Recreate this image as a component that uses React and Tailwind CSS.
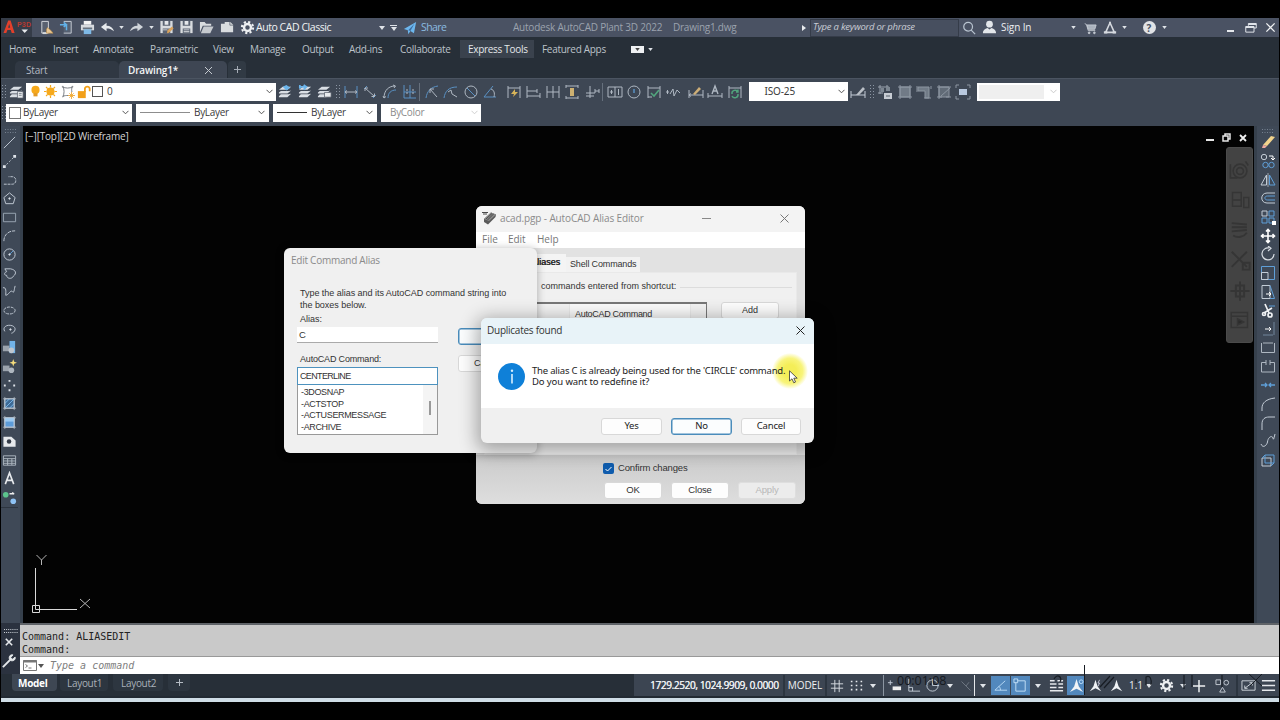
import React from "react";

const UI = "font-['Open_Sans','Noto_Sans',sans-serif]";
const NOTO = "font-['Noto_Sans','Open_Sans',sans-serif]";
const ARIAL = "font-['Liberation_Sans',Arial,sans-serif]";

function Svg({ s = 16, c = "#c3ccd6", w = 1, children }) {
  return (
    <svg width={s} height={s} viewBox="0 0 16 16" fill="none" stroke={c} strokeWidth={w} className="shrink-0">
      {children}
    </svg>
  );
}

function Cell({ className = "", children }) {
  return <div className={`flex shrink-0 items-center justify-center ${className}`}>{children}</div>;
}

function Caret({ c = "#dfe3e8", big = false }) {
  return (
    <svg width={big ? 6 : 5} height={big ? 4 : 3} viewBox="0 0 6 4" className="shrink-0">
      <path d="M0 0H6L3 4Z" fill={c} />
    </svg>
  );
}

function Chevron({ c = "#555" }) {
  return (
    <svg width="7" height="5" viewBox="0 0 7 5" fill="none" stroke={c} className="shrink-0">
      <path d="M.5 .8L3.5 3.8L6.5 .8" />
    </svg>
  );
}

function Grip() {
  return (
    <svg width="4" height="14" viewBox="0 0 4 14" className="shrink-0">
      <path d="M.5 0V14M3.5 0V14" stroke="#8b95a3" strokeDasharray="1 2" />
    </svg>
  );
}

function HGrip({ c = "#75808f" }) {
  return (
    <svg width="12" height="5" viewBox="0 0 12 5" className="shrink-0">
      <path d="M0 .5H12M0 3.5H12" stroke={c} strokeDasharray="1 1.5" />
    </svg>
  );
}

function TitleBar() {
  return (
    <div className={`flex h-[19px] shrink-0 items-center bg-[#4a5263] text-[10px] text-[#e0e3e8] ${UI}`}>
      <Cell className="h-full w-[31px] bg-[#353c48]">
        <svg width="30" height="19" viewBox="0 0 30 19">
          <path d="M1.5 15L6.2 2.5H8.6L12.6 15H9.7L8.8 12H5.4L4.3 15ZM6.1 9.8H8.2L7.2 6Z" fill="#e2402b" />
          <text x="15" y="8.5" fontSize="7" fontWeight="700" fill="#b8392f" textLength="14" fontFamily="Liberation Sans">P3D</text>
          <path d="M19.5 11.5H26L22.7 15Z" fill="#e5e8ec" />
        </svg>
      </Cell>
      <div className="w-[4px] shrink-0" />
      <Cell className="w-[20px]">
        <Svg s={15} c="#d6dade"><path d="M3 1.5H10V14H3Z" fill="#596170" /><path d="M4 14H9" strokeWidth="2" /><path d="M9 8L13 11.5L15 14H8V10Z" fill="#e9c896" stroke="#b98940" strokeWidth=".6" /></Svg>
      </Cell>
      <Cell className="w-[21px]">
        <Svg s={15} c="#c8ced5"><path d="M5 1.5H13V14H5" fill="#566071" /><path d="M1 5H7M5 2.5L8 5L5 7.5M8 5V11" stroke="#61b1e8" strokeWidth="1.6" /></Svg>
      </Cell>
      <Cell className="w-[20px]">
        <Svg s={15} c="none"><path d="M4 1H12V5H4Z" fill="#f4f4f4" /><path d="M1 5H15V11H1Z" fill="#d7dade" /><path d="M3 8H13V10H3Z" fill="#69737f" /><path d="M4 10H12V15H4Z" fill="#7fb9e6" /></Svg>
      </Cell>
      <Cell className="w-[20px]"><Svg s={15} c="none"><path d="M1 7.5L7 3V6C11 6 14 8 15 12C12 9.5 10 9 7 9V12Z" fill="#e6e9ec" /></Svg></Cell>
      <Cell className="w-[9px]"><Caret /></Cell>
      <Cell className="w-[21px]"><Svg s={15} c="none"><path d="M15 7.5L9 3V6C5 6 2 8 1 12C4 9.5 6 9 9 9V12Z" fill="#d0d5da" /></Svg></Cell>
      <Cell className="w-[9px]"><Caret /></Cell>
      <Cell className="w-[20px]">
        <Svg s={15} c="none"><path d="M1.5 1H14.5V14H1.5Z" fill="#d8dbdf" /><path d="M4 1H12V6H4ZM4 9H12V14H4Z" fill="#5a6372" /><path d="M6 1H10V5H6ZM4 10H9V11H4Z" fill="#e5e7ea" /><path d="M9 11L14 7L15.5 9L10.5 13.5L8.5 14Z" fill="#d9a25c" /></Svg>
      </Cell>
      <Cell className="w-[21px]">
        <Svg s={15} c="none"><path d="M1.5 1H14.5V14H1.5Z" fill="#d8dbdf" /><path d="M4 1H12V6H4ZM4 9H12V14H4Z" fill="#5a6372" /><path d="M6 1H10V5H6ZM5 10H11V11H5ZM5 12H11V13H5Z" fill="#e5e7ea" /></Svg>
      </Cell>
      <Cell className="w-[19px]">
        <Svg s={15} c="none"><path d="M1 2H6L7.5 4H13V6H4L1 13Z" fill="#d9dcdf" /><path d="M5 7H15.5L12 14H2Z" fill="#c6cacf" /></Svg>
      </Cell>
      <Cell className="w-[22px]">
        <Svg s={15} c="none"><path d="M1 4H5V2H11L14 5V13H1Z" fill="#d9dcdf" /><path d="M10.5 2V5.5H14" stroke="#59616f" strokeWidth=".8" /></Svg>
      </Cell>
      <Cell className="w-[18px]">
        <Svg s={15} c="#eef0f2"><circle cx="8" cy="8" r="3.7" strokeWidth="2.6" /><circle cx="8" cy="8" r="6" strokeWidth="2.2" strokeDasharray="2.3 2.41" /></Svg>
      </Cell>
      <div className="w-[120px] shrink-0 whitespace-nowrap text-[10.5px] tracking-[-0.45px] text-[#f0f2f4]">Auto CAD Classic</div>
      <Cell className="w-[12px]"><Caret big /></Cell>
      <Cell className="w-[11px] flex-col gap-[1px]"><div className="h-px w-[7px] bg-[#dfe3e8]" /><Caret big /></Cell>
      <Cell className="w-[22px]">
        <Svg s={14} c="none"><path d="M1 9L15 1L12.5 14L8.5 11.5L6 15L5.5 10.5Z" fill="#6db7ee" /><path d="M6 10.5L13 3L8.5 11.5" fill="#3d6fa3" /></Svg>
      </Cell>
      <div className="w-[92px] shrink-0 whitespace-nowrap text-[10.5px] tracking-[-0.6px] text-[#8bbbe0]">Share</div>
      <div className="w-[160px] shrink-0 whitespace-nowrap tracking-[-0.22px] text-[#9ba2ae]">Autodesk AutoCAD Plant 3D 2022</div>
      <div className="w-[125px] shrink-0 whitespace-nowrap tracking-[-0.25px] text-[#9ba2ae]">Drawing1.dwg</div>
      <Cell className="w-[12px]"><svg width="4" height="6" viewBox="0 0 4 6"><path d="M0 0L4 3L0 6Z" fill="#e8ebee" /></svg></Cell>
      <div className="flex h-[18px] w-[149px] shrink-0 items-center whitespace-nowrap border border-[#353c49] bg-[#474f5f] pl-[2px] text-[9.5px] italic tracking-[-0.25px] text-[#c9cdd4]">Type a keyword or phrase</div>
      <Cell className="w-[20px]"><Svg s={14} c="#b9c4d0" w={1.4}><circle cx="7" cy="6.5" r="5" /><path d="M10.5 10.5L15 15" /></Svg></Cell>
      <Cell className="w-[21px]"><Svg s={15} c="none"><circle cx="8" cy="4.5" r="3.6" fill="#e3e6ea" /><path d="M1 14C1 10.5 4 9 6 8.5L8 10L10 8.5C12 9 15 10.5 15 14Z" fill="#e3e6ea" /></Svg></Cell>
      <div className="w-[68px] shrink-0 whitespace-nowrap pl-[1px] tracking-[-0.1px] text-[#eceef1]">Sign In</div>
      <Cell className="w-[11px]"><Caret /></Cell>
      <Cell className="w-[21px]">
        <Svg s={14} c="#c7cdd5"><path d="M2 3L4 4L6 11H14" /><path d="M4.5 4.5H15L13.5 9.5H6Z" fill="#aab2bd" /><circle cx="7" cy="13.5" r="1" fill="#c7cdd5" /><circle cx="13" cy="13.5" r="1" fill="#c7cdd5" /></Svg>
      </Cell>
      <Cell className="w-[19px]"><Svg s={14} c="#d5d9df" w={1.8}><path d="M8 2L3 13H13Z" /><path d="M1 13H5M11 13H15M7 2.5H9" strokeWidth="2.6" /></Svg></Cell>
      <Cell className="w-[10px]"><Caret /></Cell>
      <Cell className="ml-[10px] w-[20px]">
        <div className="flex size-[13px] items-center justify-center rounded-full bg-[#e1e3e6] text-[10px] font-bold leading-none text-[#4a5263]">?</div>
      </Cell>
      <Cell className="w-[11px]"><Caret /></Cell>
      <div className="flex-1" />
      <Cell className="w-[19px] pt-[6px]"><div className="h-[2px] w-[7px] bg-[#e5e8ec]" /></Cell>
      <Cell className="w-[21px]"><Svg s={12} c="#e0e4e9" w={1.3}><path d="M4.5 5V2H15V8H12" /><path d="M1 6H12V13.5H1Z" /><path d="M1 7H12M4.5 3H15" strokeWidth="2" /></Svg></Cell>
      <Cell className="w-[18px]"><Svg s={11} c="#f0f2f4" w={1.8}><path d="M2 2L14 14M14 2L2 14" /></Svg></Cell>
    </div>
  );
}

function RibbonTabs() {
  return (
    <div className={`flex h-[24px] shrink-0 items-center whitespace-nowrap bg-[#272f38] pl-[8px] text-[10px] tracking-[-0.3px] text-[#bcc2c9] ${UI}`}>
      <div className="w-[44px]">Home</div>
      <div className="w-[40px]">Insert</div>
      <div className="w-[57px]">Annotate</div>
      <div className="w-[63px]">Parametric</div>
      <div className="w-[37px]">View</div>
      <div className="w-[52px]">Manage</div>
      <div className="w-[47px]">Output</div>
      <div className="w-[51px]">Add-ins</div>
      <div className="w-[60px]">Collaborate</div>
      <div className="flex h-[18px] w-[74px] items-center bg-[#3a424d] pl-[8px] text-[#e4e7ea]">Express Tools</div>
      <div className="w-[97px] pl-[8px]">Featured Apps</div>
      <Cell className="h-[7px] w-[13px] bg-[#eef0f2]"><Caret c="#444" /></Cell>
      <div className="ml-[4px]"><Caret /></div>
    </div>
  );
}

function DocTabs() {
  return (
    <div className={`flex h-[17px] shrink-0 whitespace-nowrap bg-[#272f38] text-[10px] text-[#b4bac2] ${UI}`}>
      <div className="ml-[14px] flex h-full w-[104px] items-center rounded-t-[5px] bg-[#303843] pl-[11px] pt-[1px] tracking-[-0.2px]">Start</div>
      <div className="flex h-full w-[108px] items-center justify-between rounded-t-[5px] bg-[#3e4653] pl-[9px] pr-[15px] pt-[1px] font-semibold tracking-[-0.15px] text-[#f3f5f6]">
        <span>Drawing1*</span>
        <svg width="7" height="7" viewBox="0 0 7 7" stroke="#c5cad0"><path d="M0 0L7 7M7 0L0 7" /></svg>
      </div>
      <Cell className="ml-[1px] h-full w-[18px] rounded-t-[4px] bg-[#313a44]">
        <svg width="7" height="7" viewBox="0 0 7 7" stroke="#a5acb5"><path d="M3.5 0V7M0 3.5H7" /></svg>
      </Cell>
    </div>
  );
}

const B = "#5f9fd8";

const Sheets = ({ extra }) => (
  <Svg s={15} c="none">
    <path d="M1 6L5 3H14L10 6ZM1 9L3 7.5H12L14 7L10 10H1ZM1 13L3 11H11L14 10.5L10 14H1Z" fill="#d9dee4" />
    {extra}
  </Svg>
);

const Group = ({ items, className = "" }) => (
  <div className={`flex shrink-0 items-center ${className}`}>
    {items.map((x, i) => <Cell key={i} className="w-[19.5px] opacity-85">{x}</Cell>)}
  </div>
);

function Toolbars() {
  const dims1 = [
    <Svg><path d="M2 2V14M14 2V14" stroke={B} /><path d="M2 8H14M4 6.5L2 8L4 9.5M12 6.5L14 8L12 9.5" /></Svg>,
    <Svg><path d="M2 5L5 2M11 14L14 11" stroke={B} /><path d="M3 4L12.5 12.5M3 7V4H6M12.5 9.5V12.5H9.5" /></Svg>,
    <Svg><path d="M6 14C6 9 9 6 14 6" stroke={B} /><path d="M2 14C2 6 7 2 13 2M1 12L2 14L4 12.5M11 1L13.5 2L12 4" /></Svg>,
    <Svg><path d="M3 1V14H15M9 1V14M3 8H15" stroke={B} /><path d="M6 5V11M12 5V11" strokeDasharray="2 1" /></Svg>,
  ];
  const dims2 = [
    <Svg><path d="M2 14C3 7 7 3 14 2" stroke={B} /><path d="M6 5L13 13M6 9V5H10" /></Svg>,
    <Svg><path d="M1 14C2 7 6 3 14 3" stroke={B} /><path d="M5 8L8 6L9 10L14 13" /></Svg>,
    <Svg><circle cx="8" cy="8" r="6" /><path d="M4 4L12 12" stroke={B} /></Svg>,
    <Svg><path d="M11 2L2 13H14" stroke={B} /><path d="M9 5C12 6 13 9 12 13" /></Svg>,
  ];
  const dims3 = [
    <Svg><path d="M2 2V14M14 2V14M2 4H14" /><path d="M9 5L5 10H8L7 13L12 8H9Z" fill="#f2c75a" stroke="none" /></Svg>,
    <Svg><path d="M2 2V14M12 5V9M15 9V14M2 7H12M2 12H15" /></Svg>,
    <Svg><path d="M2 2V14M8 2V14M14 2V14M2 8H14" /></Svg>,
    <Svg><path d="M2 2H14M2 14H14M2 1V4M14 1V4M2 12V15M14 12V15" /><path d="M6 4H10V12H6Z" fill="#e8c477" stroke="none" /></Svg>,
    <Svg><path d="M6 2V14M2 9H11M2 12H10M11 7H15M11 5V9M15 5V9" /></Svg>,
  ];
  const dims4 = [
    <Svg><path d="M1 3H15V13H1ZM8 3V13M3 8H6M4.5 6V10M11.5 5V11" /></Svg>,
    <Svg><circle cx="8" cy="8" r="6" /><path d="M8 5V9" stroke={B} strokeWidth="1.5" /></Svg>,
    <Svg><path d="M2 2V14M14 2V14M2 4H14M2 13H6" /><path d="M5 9L8 12L13 6" stroke="#55b685" strokeWidth="1.6" /></Svg>,
    <Svg><path d="M1 8H4M2.5 6V10M5 10L8 5L9 12L12 6L15 9" /></Svg>,
  ];
  const dims5 = [
    <Svg><path d="M1 6V14M15 6V14M1 11H15M3 9.5L1 11L3 12.5" /><path d="M5 10L11 3L13 5L7 11Z" fill="#e7c07e" stroke="none" /></Svg>,
    <Svg><path d="M1 9V14M15 9V14M1 12H15" /><path d="M5 10L8 2L11 10M6 7H10" strokeWidth="1.4" /></Svg>,
    <Svg><path d="M2 2V14M14 2V14M2 4H14" /><path d="M5 10A3.2 3.2 0 0 1 11 8M11 10A3.2 3.2 0 0 1 5 12M11 5.5V8H9" stroke="#55b685" strokeWidth="1.4" /></Svg>,
  ];
  const refs = [
    <Svg c="#aab3bd"><path d="M1 3H12M3 1V10M1 9H6M10 1V7" /><path d="M4 4H7V8H4ZM9 3H13V7H9Z" fill="#87919c" stroke="none" /><path d="M7 9H15V15H7Z" fill="#dfe4ea" stroke="none" /><path d="M9 12H13" stroke="#59636f" /></Svg>,
    <Svg c="#9aa4af"><path d="M3 3H13V13H3Z" fill="#7b8590" /><path d="M1 3H15M1 13H15M3 1V15M13 1V15" /></Svg>,
    <Svg c="#9aa4af"><path d="M2 3H13V14H9V7H2Z" fill="#7b8590" /><path d="M1 2V8M15 2V5M8 14H15" /></Svg>,
    <Svg c="#9aa4af"><path d="M3 3H13V13H3Z" fill="#68727e" /><path d="M1 3H15M1 13H6M3 1V15M5 12L14 4M10 13H15" /></Svg>,
    <Svg c="#9aa4af"><path d="M1 4V1H4M12 1H15V4M1 12V15H4M12 15H15V12" /><path d="M4 5H12V11H4Z" fill="#cfe0f8" stroke="none" /></Svg>,
  ];
  const Sep = () => <div className="h-[18px] w-px shrink-0 bg-[#66707d]" />;
  return (
    <div className={`flex h-[48px] shrink-0 flex-col border-t border-[#4b5461] bg-[#3e4754] pt-[3px] text-[10px] text-[#3b3b3b] ${UI}`}>
      <div className="flex h-[19px] items-center">
        <Cell className="w-[6px]"><Grip /></Cell>
        <Cell className="w-[19px]"><Sheets extra={<path d="M9 8H15V15H9ZM10.5 10H13.5M10.5 12H13.5" fill="#e8ebee" stroke="#59616d" strokeWidth=".8" />} /></Cell>
        <div className="flex h-[18px] w-[250px] shrink-0 items-center bg-white pr-[3px]">
          <Cell className="w-[19px]"><Svg s={13} c="none"><circle cx="8" cy="6" r="5" fill="#f6a91c" /><path d="M5.5 10H10.5V14H5.5Z" fill="#e39a25" /></Svg></Cell>
          <Cell className="w-[10px]"><Svg s={13} c="#f6a91c" w={2}><circle cx="8" cy="8" r="4" fill="#f6a91c" /><path d="M8 0V3M8 13V16M0 8H3M13 8H16M2.5 2.5L4.5 4.5M11.5 11.5L13.5 13.5M13.5 2.5L11.5 4.5M2.5 13.5L4.5 11.5" strokeWidth="1.5" /></Svg></Cell>
          <Cell className="ml-[3px] w-[20px]"><Svg s={14} c="#6a6f76"><path d="M1 2C6 4 9 4 14 2M2 1C4 6 4 9 2 14M13 1C12 4 12 6 12.500 8M2 13C4 12 6 12 8 12" /><path d="M12 8V16M8 12H16M9.5 9.5L14.5 14.5M14.5 9.5L9.5 14.5" stroke="#f0a830" /></Svg></Cell>
          <Cell className="w-[12px]"><Svg s={14} c="#f2a019" w={2}><path d="M1 7H10V15H1Z" fill="#f2a019" stroke="none" /><path d="M9 8V4A2.8 2.8 0 0 1 14.5 4V7" /></Svg></Cell>
          <div className="ml-[2px] h-[11px] w-[11px] border border-[#555]" />
          <div className="ml-[4px] flex-1 text-[10px]">0</div>
          <Chevron />
        </div>
        <Cell className="w-[19px]"><Sheets extra={<path d="M5 3L9 1L13 4L9 7Z" fill="#6bb4ea" />} /></Cell>
        <Cell className="w-[20px]"><Sheets extra={<path d="M2 1V5M1 3H8M6 1L9 3L6 6" stroke="#6bb4ea" strokeWidth="1.8" />} /></Cell>
        <Cell className="w-[19px]"><Sheets extra={<path d="M8 9H15V14H8Z" fill="#e8ebee" stroke="#59616d" strokeWidth=".8" />} /></Cell>
        <Cell className="w-[7px]"><Grip /></Cell>
        <Group items={dims1} />
        <Sep />
        <Group items={dims2} className="ml-[2px]" />
        <Group items={dims3} className="ml-[4px] w-[98px]" />
        <Sep />
        <Group items={dims4} className="ml-[2px] w-[80px]" />
        <Group items={dims5} className="ml-[1px]" />
        <div className="ml-[4px] flex h-[19px] w-[99px] shrink-0 items-center justify-between bg-white pl-[16px] pr-[3px]">
          <span className={`tracking-[-0.15px] ${NOTO}`}>ISO-25</span><Chevron />
        </div>
        <Cell className="w-[20px]"><Svg><path d="M1 7V14M15 7V14M1 11H15" /><path d="M6 11L13 3L15 5L9 11Z" fill="#b9bfc6" stroke="none" /></Svg></Cell>
        <Cell className="w-[8px]"><Grip /></Cell>
        <Group items={refs} />
        <div className="ml-[4px] flex h-[18px] w-[83px] shrink-0 items-center bg-white py-[2px] pl-[2px] pr-[3px]">
          <div className="mr-[6px] h-full flex-1 bg-[#efefef]" /><Chevron c="#c9c9c9" />
        </div>
      </div>
      <div className="flex h-[23px] items-center text-[10px]">
        <Cell className="w-[5px]"><Grip /></Cell>
        <div className="flex h-[18px] w-[126px] items-center bg-white px-[3px]">
          <div className="h-[12px] w-[12px] border border-[#777]" />
          <span className="ml-[2px] flex-1 tracking-[-0.3px]">ByLayer</span><Chevron />
        </div>
        <div className="ml-[4px] flex h-[18px] w-[133px] items-center bg-white px-[4px]">
          <div className="h-px w-[50px] bg-[#8d8d8d]" />
          <span className="ml-[4px] flex-1 tracking-[-0.3px]">ByLayer</span><Chevron />
        </div>
        <div className="ml-[4px] flex h-[18px] w-[104px] items-center bg-white px-[4px]">
          <div className="h-px w-[30px] bg-[#333]" />
          <span className="ml-[4px] flex-1 tracking-[-0.3px]">ByLayer</span><Chevron />
        </div>
        <div className="ml-[4px] flex h-[18px] w-[100px] items-center bg-white pl-[9px] pr-[3px] text-[#8c8c8c]">
          <span className="flex-1 tracking-[-0.3px]">ByColor</span><Chevron c="#cfcfcf" />
        </div>
      </div>
    </div>
  );
}

function DrawBar() {
  const icons = [
    <Svg s={15}><path d="M2 14L14 2" /></Svg>,
    <Svg s={15}><path d="M2 14L14 2" strokeDasharray="2 2" /><path d="M1 12H4V15H1ZM12 1H15V4H12Z" fill="#dfe4ea" stroke="none" /></Svg>,
    <Svg s={15}><path d="M2 13H11C16 13 16 5 11 5H7" strokeDasharray="3 1" /></Svg>,
    <Svg s={15}><path d="M8 2L14 7L12 13.5H4L2 7Z" /><circle cx="8" cy="8" r=".8" fill="#fff" /></Svg>,
    <Svg s={15} c="#9ba7b4"><path d="M1.5 3.5H14.5V12.5H1.5Z" /></Svg>,
    <Svg s={15}><path d="M2 14C2 8 6 3 14 3" strokeDasharray="4 1" /></Svg>,
    <Svg s={15}><circle cx="8" cy="8" r="6" /><path d="M8 8L12 4" stroke={B} /><circle cx="8" cy="8" r=".8" fill="#fff" /></Svg>,
    <Svg s={15}><path d="M3 3H9C15 4 16 8 12 11C11 14 5 14 5 10C2 10 2 7 5 6Z" /></Svg>,
    <Svg s={15}><path d="M1 4C5 3 4 9 4 12C7 12 9 6 11 8C13 11 13 5 14 2" /></Svg>,
    <Svg s={15}><ellipse cx="8" cy="8" rx="6" ry="3.7" strokeDasharray="3 1" /></Svg>,
    <Svg s={15}><path d="M3 10C0 6 5 2 11 4C16 6 14 11 10 12" /><circle cx="9" cy="8" r=".8" fill="#fff" /></Svg>,
    <Svg s={15}><path d="M1 6H8V12H1Z" fill="#9ba3ad" stroke="none" /><path d="M8 1H14V14H8Z" fill="#72b3e8" stroke="none" /><circle cx="10" cy="11" r="3" fill="#bfc6ce" stroke="none" /></Svg>,
    <Svg s={15}><path d="M1 7H8V13H1Z" fill="#9ba3ad" stroke="none" /><circle cx="10" cy="12" r="3" fill="#aeb6bf" stroke="none" /><path d="M12 0L13 3L16 4L13 5L12 8L11 5L8 4L11 3Z" fill="#f5dc7c" stroke="none" /></Svg>,
    <Svg s={15} c="none"><path d="M7 2H9V4H7ZM7 12H9V14H7ZM2 7H4V9H2ZM12 7H14V9H12Z" fill="#dfe4ea" /></Svg>,
    <Svg s={15}><path d="M3 3H13V13H3Z" fill="#3e6a96" /><path d="M3 8L8 3M3 13L13 3M8 13L13 8" stroke="#79b7ea" /><path d="M1 3H15M1 13H15M3 1V15M13 1V15" strokeWidth=".7" /></Svg>,
    <Svg s={15}><path d="M3 3H13V13H3Z" fill="#5d9cd8" /><path d="M3 3H13V7H3Z" fill="#9bc9f0" stroke="none" /><path d="M1 3H15M1 13H15M3 1V15M13 1V15" strokeWidth=".7" /></Svg>,
    <Svg s={15}><path d="M1.5 3H10L14.5 7V13.5H1.5Z" fill="#e6e9ec" stroke="none" /><circle cx="7.5" cy="8" r="2.4" fill="#333b47" stroke="none" /></Svg>,
    <Svg s={15} c="#aeb7c1"><path d="M1.5 3H14.5V13H1.5ZM1.5 6H14.5M1.5 8.5H14.5M1.5 11H14.5M6 6V13M10.5 6V13" /></Svg>,
    <Svg s={15} c="#e6e9ec" w={1.7}><path d="M3.5 14L8 2L12.5 14M5 10H11" /></Svg>,
    <Svg s={15} c="none"><circle cx="4" cy="5" r="3" fill="#5cc48d" /><path d="M8 4H13M11 2.5L13 4.5" stroke="#eee" strokeWidth="1.4" /><circle cx="12" cy="12" r="3" fill="#8fc3f5" /></Svg>,
  ];
  return (
    <div className="flex w-[22px] shrink-0 flex-col border-r-[3px] border-[#36404c] bg-[#3f4957]">
      <Cell className="h-[7px] pt-[3px]"><HGrip /></Cell>
      {icons.map((x, i) => <Cell key={i} className="h-[18.7px] w-[17px]">{x}</Cell>)}
      <div className="h-px w-[17px] bg-[#2d3540]" />
    </div>
  );
}

function ModifyBar() {
  const icons = [
    <Svg c="none"><path d="M3 11L11 2L15 3L7 12Z" fill="#f1d38c" /><path d="M3 11L7 12L5 14L2 14Z" fill="#f0a9a0" /></Svg>,
    <Svg><circle cx="4" cy="4" r="2.7" /><path d="M9 3H13V7M11 5L13 7L15 5" stroke="#fff" /><circle cx="5.5" cy="12" r="2.7" stroke={B} /><circle cx="11.5" cy="12" r="2.7" stroke={B} /></Svg>,
    <Svg><path d="M6.5 3V13H1Z" /><path d="M9.5 3V13H15Z" stroke={B} /><path d="M8 1V15" strokeWidth=".7" /></Svg>,
    <Svg><path d="M15 3H7C0 3 0 13 7 13H15" /><path d="M15 6H7.5C4 6 4 10 7.5 10H15" stroke={B} /></Svg>,
    <Svg><path d="M2 2H7V7H2Z" /><path d="M9 2H14V7H9ZM2 9H7V14H2ZM9 9H14V14H9Z" stroke={B} /><path d="M12 12H16V16H12Z" fill="#fff" stroke="none" /></Svg>,
    <Svg c="#fff" w={1.6}><path d="M8 1V15M1 8H15M6 3.5L8 1.5L10 3.5M6 12.5L8 14.5L10 12.5M3.5 6L1.5 8L3.5 10M12.5 6L14.5 8L12.5 10" /></Svg>,
    <Svg c="#d9dee4" w={1.2}><path d="M9 2A6 6 0 1 0 14 8M8 0L11 2.3L8 5" /></Svg>,
    <Svg><path d="M1.5 1.5H14.5V14.5H1.5Z" stroke={B} /><path d="M1.5 7.5H8V14.5H1.5Z" /></Svg>,
    <Svg><path d="M2 1.5H10V14.5H2Z" /><path d="M10 1.5L14.5 14.5H10" stroke={B} /><path d="M6 10H11M9 8L11 10L9 12" stroke="#fff" /></Svg>,
    <Svg c="#f0f2f4" w={1.7}><path d="M5 1L9 10M12 5L4 10" /><circle cx="10" cy="12" r="2" /><circle cx="4" cy="11" r="1.5" /><path d="M9 3H15" stroke={B} strokeWidth="1" /></Svg>,
    <Svg><path d="M3 14H13M14 1V14" stroke="#71859b" /><path d="M5 8H11M9 6L11 8L9 10" stroke="#fff" /></Svg>,
    <Svg c="#aeb7c1"><path d="M1.5 3V12.5H14.5V3M3 3H13" /></Svg>,
    <Svg c="#aeb7c1"><path d="M6 3.5H1.5V13H14.5V3.5H10M6 1V6M10 1V6" /></Svg>,
    <Svg c={B} w={1.3}><path d="M1 8H7M5 6L7 8L5 10M15 8H9M11 6L9 8L11 10" /></Svg>,
    <Svg><path d="M2 15V12C2 7 6 3 15 2" /></Svg>,
    <Svg><path d="M2 15V9C2 4 5 2 9 2H15" /></Svg>,
    <Svg><path d="M1 11C3 16 7 12 7.500 9C8 4 12 2 13 5C13.500 8 14 5 15 1" /></Svg>,
    <Svg><path d="M2 6H11V14H2Z" /><path d="M5 3H14V11H5ZM2 6L5 3M11 14L14 11" stroke={B} /></Svg>,
  ];
  return (
    <div className="flex w-[25px] shrink-0 flex-col border-l-[3px] border-[#36404c] bg-[#3f4957]">
      <Cell className="h-[7px] pt-[3px]"><HGrip /></Cell>
      {icons.map((x, i) => <Cell key={i} className="h-[18.7px] w-[21px]">{x}</Cell>)}
    </div>
  );
}

const BTN_TONES = {
  normal: "border-[#d8d8d8] bg-[#fdfdfd]",
  primary: "border-[#4a8cbb] bg-[#fbfdfe] shadow-[inset_0_0_0_0.5px_#4a8cbb]",
  disabled: "border-[#dedede] bg-[#ececec] text-[#b8b8b8]",
};

function Btn({ className = "", tone = "normal", children }) {
  return <Cell className={`h-[17px] rounded-[3px] border ${BTN_TONES[tone]} ${className}`}>{children}</Cell>;
}

function AliasEditor() {
  return (
    <div className={`absolute left-[453px] top-[80px] flex h-[298px] w-[329px] flex-col overflow-hidden rounded-[6px] bg-[#e2e2e2] text-[10px] ${UI}`}>
      <div className="flex h-[26px] shrink-0 items-center bg-[#f3f3f3] pb-[2px] pl-[5px] text-[#8b8b8b]">
        <svg width="16" height="16" viewBox="0 0 16 16" fill="none">
          <path d="M3 9L10 2.500L15 4.500L14.500 7L7 14.500L3 12Z" fill="#5a5a5a" />
          <path d="M3 9L10 2.500L15 4.500L8 11Z" fill="#8a8a8a" />
          <path d="M1 2.500H7M2 4H6M5 9L11 3.500M6.500 10L12.500 4" stroke="#4a4a4a" />
        </svg>
        <span className="ml-[3px] flex-1 whitespace-nowrap tracking-[-0.12px]">acad.pgp - AutoCAD Alias Editor</span>
        <div className="h-px w-[9px] bg-[#888]" />
        <svg width="9" height="9" viewBox="0 0 9 9" stroke="#777" className="ml-[69px] mr-[16px]"><path d="M.5 .5L8.5 8.5M8.5 .5L.5 8.5" /></svg>
      </div>
      <div className="flex h-[16px] shrink-0 items-center bg-white pb-[1px] pl-[6px] text-[#777]">
        <span className="w-[26px]">File</span><span className="w-[29px] tracking-[-0.1px]">Edit</span><span>Help</span>
      </div>
      <div className={`mx-[8px] flex h-[24px] shrink-0 items-end text-[9px] text-[#333] ${ARIAL}`}>
        <div className="flex h-[18px] w-[82px] items-center justify-end bg-[#f4f4f4] pr-[6px] text-[#222] [text-shadow:0.4px_0_0_#222]">Aliases</div>
        <div className="flex h-[15px] w-[74px] items-center whitespace-nowrap bg-[#f2f2f2] pl-[4px] pt-[1px] tracking-[-0.15px]">Shell Commands</div>
      </div>
      <div className={`mx-[8px] flex h-[183px] shrink-0 flex-col border border-[#e9e9e9] bg-[#f0f0f0] text-[9px] text-[#333] ${ARIAL}`}>
        <div className="flex h-[29px] items-center pb-[1px]">
          <span className="ml-[56px] whitespace-nowrap tracking-[0.02px]">commands entered from shortcut:</span>
          <div className="ml-[4px] mr-[4px] h-px flex-1 bg-[#dcdcdc]" />
        </div>
        <div className="flex">
          <div className="h-[40px] w-[222px] border-r border-t-2 border-[#777] bg-[#f3f3f3]">
            <div className="ml-[84px] flex h-[22px] w-[122px] items-center border-x border-[#eaeaea] bg-[#fbfbfb] pl-[5px] tracking-[-0.3px]">AutoCAD Command</div>
          </div>
          <Btn className="ml-[14px] w-[58px]">Add</Btn>
        </div>
      </div>
      <div className={`flex flex-1 flex-col bg-linear-to-b from-[#cbcbcb] to-[#dedede] text-[9.5px] text-[#333] ${ARIAL}`}>
        <div className="ml-[127px] mt-[8px] flex h-[11px] items-center">
          <div className="flex size-[11px] items-center justify-center rounded-[2px] bg-[#0f5cad]">
            <svg width="7" height="6" viewBox="0 0 7 6" fill="none" stroke="#fff"><path d="M.5 3L2.5 5L6.5 1" /></svg>
          </div>
          <span className="ml-[4px] whitespace-nowrap tracking-[-0.15px]">Confirm changes</span>
        </div>
        <div className="ml-[128px] mt-[8px] flex gap-[9px] tracking-[-0.15px]">
          <Btn className="w-[58px]">OK</Btn>
          <Btn className="w-[58px]">Close</Btn>
          <Btn tone="disabled" className="w-[58px]">Apply</Btn>
        </div>
      </div>
    </div>
  );
}

function EditAlias() {
  return (
    <div className={`absolute left-[261px] top-[122px] flex h-[205px] w-[253px] flex-col overflow-hidden rounded-[6px] bg-[#f0f0f0] text-[9px] leading-[11px] text-[#333] shadow-[0_1px_8px_rgba(0,0,0,0.3)] ${ARIAL}`}>
      <div className={`flex h-[25px] items-center pl-[7px] text-[10px] tracking-[-0.25px] text-[#8a8a8a] ${UI}`}>Edit Command Alias</div>
      <div className="mt-[15px] whitespace-nowrap pl-[16px] leading-[11.5px] tracking-[-0.03px]">Type the alias and its AutoCAD command string into<br />the boxes below.</div>
      <div className="flex pl-[13px]">
        <div className="w-[141px] shrink-0">
          <div className="mt-[3px] pl-[3px]">Alias:</div>
          <div className="mt-[2px] flex h-[16px] items-center border-b border-[#aaa] bg-white pl-[2px] text-[9.5px]">C</div>
          <div className="mt-[11px] pl-[3px] tracking-[-0.18px]">AutoCAD Command:</div>
          <div className="mt-[2px] flex h-[18px] items-center border border-[#4d92be] bg-white pl-[2px] tracking-[-0.65px]">CENTERLINE</div>
          <div className="flex h-[50px] border border-t-0 border-[#999] bg-white">
            <div className="flex-1 whitespace-nowrap pl-[3px] pt-[2px] leading-[11.7px] tracking-[-0.35px]">
              <div>-3DOSNAP</div><div>-ACTSTOP</div><div>-ACTUSERMESSAGE</div><div>-ARCHIVE</div>
            </div>
            <Cell className="w-[14px] bg-[#f4f4f4] pb-[4px]"><div className="h-[14px] w-[2px] bg-[#999]" /></Cell>
          </div>
        </div>
        <div className="ml-[20px] mt-[17px] flex shrink-0 flex-col gap-[10px]">
          <Btn tone="primary" className="w-[60px]" />
          <Btn className="w-[60px]">Cancel</Btn>
        </div>
      </div>
    </div>
  );
}

function Duplicates() {
  return (
    <div className={`absolute left-[458px] top-[192px] flex h-[125px] w-[333px] flex-col rounded-[6px] bg-[#f0f0f0] text-[9.5px] text-[#222] shadow-[0_4px_18px_4px_rgba(0,0,0,0.32)] ${NOTO}`}>
      <div className={`flex h-[26px] shrink-0 items-center justify-between rounded-t-[6px] bg-[#e8f3f8] pb-[1px] pl-[6px] pr-[9px] text-[10px] tracking-[-0.25px] text-[#333] ${UI}`}>
        <span>Duplicates found</span>
        <svg width="9" height="9" viewBox="0 0 9 9" stroke="#222"><path d="M.5 .5L8.5 8.5M8.5 .5L.5 8.5" /></svg>
      </div>
      <div className="relative flex h-[64px] shrink-0 items-center bg-white pl-[17px]">
        <div className="absolute left-[291px] top-[9px] size-[36px] rounded-full bg-[radial-gradient(circle,#f4ee58_25%,#f8f47c_50%,transparent_71%)]" />
        <div className="flex size-[27px] items-center justify-center rounded-full bg-[#0f80d8]">
          <svg width="4" height="15" viewBox="0 0 4 15" fill="#d6efff"><circle cx="2" cy="1.8" r="1.2" /><path d="M1.2 5H2.8V14.5H1.2Z" /></svg>
        </div>
        <div className="relative ml-[7px] whitespace-nowrap leading-[11px]">
          <div className="tracking-[-0.2px]">The alias C is already being used for the 'CIRCLE' command.</div>
          <div className="tracking-[-0.1px]">Do you want to redefine it?</div>
        </div>
        <svg width="9" height="14" viewBox="0 0 9 14" className="absolute left-[308px] top-[26px]"><path d="M.5 .8V11L3 8.8L4.8 12.8L6.5 12L4.8 8.2H8.2Z" fill="#fff" stroke="#333" strokeWidth=".8" /></svg>
      </div>
      <div className="flex flex-1 items-center justify-end gap-[9px] pr-[13px] pt-[2px] tracking-[-0.2px]">
        <Btn className="w-[61px]">Yes</Btn>
        <Btn tone="primary" className="w-[61px]">No</Btn>
        <Btn className="w-[60px]">Cancel</Btn>
      </div>
    </div>
  );
}

function Canvas() {
  return (
    <div className="relative flex flex-1 flex-col bg-[#030303]">
      <div className="flex h-[21px] items-center justify-between pl-[2px] pr-[7px]">
        <span className={`whitespace-nowrap text-[10px] tracking-[-0.2px] text-[#d6d6d6] ${UI}`}>[−][Top][2D Wireframe]</span>
        <div className="flex items-center pt-[2px]">
          <div className="mr-[8px] mt-[4px] h-[2px] w-[8px] bg-[#e5e5e5]" />
          <svg width="9" height="9" viewBox="0 0 9 9" fill="none" stroke="#e5e5e5" strokeWidth="1.5"><path d="M3 2.5V1H8V6H6.5M1 3H6V8H1Z" /></svg>
          <svg width="8" height="8" viewBox="0 0 8 8" stroke="#f0f0f0" strokeWidth="1.8" className="ml-[8px]"><path d="M1 1L7 7M7 1L1 7" /></svg>
        </div>
      </div>
      <div className="mr-px flex h-[196px] w-[27px] flex-col items-center justify-between self-end rounded-[3px] border border-[#4b4b4b] bg-[#434343] py-[12px]">
        <Svg s={22} c="#353535" w={1.2}><circle cx="8" cy="8" r="5" /><circle cx="8" cy="8" r="2.5" /><path d="M1 3V13H6M12 1L14 4" /></Svg>
        <Svg s={20} c="#353535" w={1.2}><path d="M2 2H9V13H2ZM11 6H15V14H11ZM2 8H9" /></Svg>
        <Svg s={22} c="#353535" w={1.4}><path d="M2 3L13 4M2 6L13 6M2 9L13 8M3 12C6 14 11 13 13 10" /></Svg>
        <Svg s={22} c="#353535" w={1.4}><path d="M2 2L13 13M13 2L2 13M10 10H15V15H10Z" /></Svg>
        <Svg s={22} c="#353535" w={1.4}><path d="M8 1V15M1 8H15M5 4H11V12H5Z" /></Svg>
        <Svg s={20} c="#353535" w={1.2}><path d="M1 2H14V14H1ZM1 5H14" /><path d="M6 7V12L11 9.5Z" fill="#2c2c2c" /></Svg>
      </div>
      <svg width="64" height="62" viewBox="0 0 64 62" fill="none" stroke="#d8d8d8" className="absolute left-[6px] top-[427px]">
        <path d="M6.500 15V56.500H48M3.500 52.500H10.500V59.500H3.500Z" />
        <path d="M7.500 2L12.500 7L17.500 2M12.500 7V12M51 46L61 55M61 46L51 55" stroke="#b5b5b5" />
      </svg>
      <AliasEditor />
      <EditAlias />
      <Duplicates />
    </div>
  );
}

function CommandLine() {
  return (
    <div className="flex h-[51px] shrink-0 font-['DejaVu_Sans_Mono',monospace] text-[10px]">
      <div className="flex w-[19px] shrink-0 flex-col items-center bg-[#2b323f] pt-[6px]">
        <svg width="14" height="5" viewBox="0 0 14 5"><path d="M0 .5H14M0 3.500H14" stroke="#cfd4da" strokeDasharray="1 1.100" /></svg>
        <svg width="8" height="8" viewBox="0 0 8 8" stroke="#e6e9ec" strokeWidth="1.6" className="-ml-[3px] mt-[4px]"><path d="M.8 .8L7.2 7.2M7.2 .8L.8 7.2" /></svg>
        <div className="-ml-[3px] mt-[8px]"><Svg s={14} c="#e6e9ec" w={2.2}><path d="M1 15L9 7" /><path d="M15 3.500L12 6L10 4L12.500 1C9 0 7 4 9 7C12 9 16 7 15 3.500" strokeWidth="1" fill="#e6e9ec" /></Svg></div>
      </div>
      <div className="flex flex-1 flex-col border-t-2 border-[#5f6368]">
        <div className="flex h-[32px] flex-col border-b border-[#999] bg-[#c9c9c9] pl-[2px] pt-[5px] leading-[13px] text-[#222]">
          <div>Command: ALIASEDIT</div>
          <div>Command:</div>
        </div>
        <div className="flex flex-1 items-center bg-white pl-[3px]">
          <svg width="14" height="11" viewBox="0 0 14 11" fill="none" stroke="#777"><path d="M.5 .5H13.500V10.500H.5ZM2.500 4.500L4.500 6L2.500 7.500M5.500 8H8.500" /><path d="M0 1.500H14" strokeWidth="2" /></svg>
          <div className="ml-[1px]"><Caret c="#555" big /></div>
          <span className="ml-[6px] italic text-[#808080]">Type a command</span>
        </div>
      </div>
    </div>
  );
}

function StatusBar() {
  const Sep = () => <div className="h-full w-[2px] shrink-0 bg-[#2c3540]" />;
  const Person = ({ children }) => <Svg s={15} c="none"><path d="M8 1L10.500 9L15 15L8 11.500L1 15L5.500 9Z" fill="#f0f3f6" />{children}</Svg>;
  return (
    <div className={`flex h-[24px] shrink-0 justify-between border-b-2 border-[#222a33] bg-[#272f38] text-[10px] ${UI}`}>
      <div className="flex h-[17px] items-center whitespace-nowrap tracking-[-0.3px] text-[#a9b0b9]">
        <div className="ml-[11px] flex h-full w-[45px] items-center rounded-b-[4px] bg-[#3e4753] pl-[6px] pt-[1px] font-bold text-white">Model</div>
        <div className="ml-[3px] flex h-full w-[48px] items-center rounded-b-[4px] bg-[#2d3640] pl-[7px] pt-[1px]">Layout1</div>
        <div className="ml-[5px] flex h-full w-[50px] items-center rounded-b-[4px] bg-[#2d3640] pl-[8px] pt-[1px]">Layout2</div>
        <Cell className="ml-[5px] h-full w-[22px] rounded-b-[4px] bg-[#2d3640]"><svg width="7" height="7" viewBox="0 0 7 7" stroke="#b5bcc4"><path d="M3.500 0V7M0 3.500H7" /></svg></Cell>
      </div>
      <div className="relative flex h-[22px] w-[645px] items-center bg-[#3c4552] pt-[1px] text-[#eef0f2]">
        <div className="w-[149px] shrink-0 whitespace-nowrap pl-[16px] tracking-[-0.35px] [text-shadow:0.3px_0_0_#eef0f2]">1729.2520, 1024.9909, 0.0000</div>
        <Sep />
        <Cell className="w-[40px] tracking-[-0.1px]">MODEL</Cell>
        <Sep />
        <Cell className="w-[20px]"><Svg s={14} c="#d5dae0" w={1.100}><path d="M5.500 1V15M10.500 1V15M1 5.500H15M1 10.500H15" /></Svg></Cell>
        <Cell className="w-[19px]"><Svg s={13} c="#e5e8ec" w={2}><path d="M1 3H15M1 8H15M1 13H15" strokeDasharray="2 4" /></Svg></Cell>
        <Cell className="w-[13px]"><Caret big /></Cell>
        <div className="ml-[4px] h-full w-px shrink-0 bg-[#8b95a1]" />
        <Cell className="w-[20px]"><Svg s={15}><path d="M1 5H6M3.500 2.500V7.500" /><path d="M6 9H15V13H6Z" fill="#eee" stroke="none" /></Svg></Cell>
        <Cell className="w-[19px]"><Svg s={15}><path d="M3 1V14H15M3 10H7V14" /></Svg></Cell>
        <Cell className="w-[19px]"><Svg s={15}><circle cx="8" cy="8" r="6" /><path d="M8 1V8H15" /></Svg></Cell>
        <Cell className="w-[16px]"><Caret big /></Cell>
        <Cell className="w-[16px]"><Svg s={12} c="#7c8591"><path d="M2 2L14 14M12 3L8 8" /></Svg></Cell>
        <div className="h-full w-px shrink-0 bg-[#e5e8eb]" />
        <Cell className="w-[16px]"><Caret big /></Cell>
        <Cell className="h-[19px] w-[19px] bg-[#5288bd]"><Svg s={15} c="#b9daf5"><path d="M2 13H15M2 13L13 3M8 13C8 11 7 9 6 9" /></Svg></Cell>
        <Cell className="ml-[1px] h-[19px] w-[19px] bg-[#5288bd]"><Svg s={15} c="#c3e0f8"><path d="M3 3H13V14H3Z" /><path d="M1 1H5V5H1Z" fill="#5288bd" /></Svg></Cell>
        <Cell className="w-[15px]"><Caret big /></Cell>
        <Cell className="w-[22px]"><Svg s={15} c="#e5e8ec" w={1.600}><path d="M1 3H6M1 6.500H8M1 10H8M1 13.500H15M9 3H15M10 6.500H15M10 10H15" /></Svg></Cell>
        <Cell className="h-[19px] w-[18px] bg-[#5288bd]"><Person><circle cx="13" cy="4" r="2" stroke="#bfe0fb" /></Person></Cell>
        <Cell className="w-[21px]"><Svg s={13} c="none"><path d="M8 1L10.500 9L15 15L8 11.500L1 15L5.500 9Z" fill="#f0f3f6" /><path d="M13 1L11 5H13L11 9" stroke="#dde" /></Svg></Cell>
        <Cell className="w-[20px]"><Svg s={13} c="none"><path d="M8 1L10.500 9L15 15L8 11.500L1 15L5.500 9Z" fill="#f0f3f6" /></Svg></Cell>
        <Cell className="w-[20px] text-[10px]">1:1</Cell>
        <Cell className="w-[6px]"><Caret big /></Cell>
        <Cell className="w-[28px]"><Svg s={15} c="#eef0f2"><circle cx="8" cy="8" r="3.700" strokeWidth="2.600" /><circle cx="8" cy="8" r="6" strokeWidth="2.200" strokeDasharray="2.300 2.410" /></Svg></Cell>
        <Cell className="w-[6px]"><Caret big /></Cell>
        <Cell className="w-[26px]"><Svg s={14} c="#eef0f2" w={1.700}><path d="M8 1V15M1 8H15" /></Svg></Cell>
        <Cell className="w-[21px]"><Svg s={15} c="#c5ccd4"><path d="M1 2H6V7H1ZM8 10L11 15H5Z" /><circle cx="12" cy="5" r="2.500" /></Svg></Cell>
        <div className="ml-[3px]" />
        <Sep />
        <Cell className="w-[20px]"><Svg s={15} c="#cfd5dc"><path d="M1 3H15V13H1ZM4 11L12 5M9 5H12V8M4 8V11H7" /></Svg></Cell>
        <Cell className="w-[20px]"><Svg s={15} c="#e5e8ec" w={1.600}><path d="M1 3H15M1 8H15M1 13H15" /></Svg></Cell>
        <div className="absolute left-[263px] top-[0px] whitespace-nowrap text-[12.5px] leading-[14px] text-[#15191f]">00:01:08</div>
        <svg width="215" height="32" viewBox="0 0 215 32" fill="none" stroke="#171c23" className="absolute left-[400px] top-[-9px]">
          <path d="M50.500 0V30" strokeWidth="1" />
          <path d="M66 22L76 11M70 23L80 12M20 14C23 8 29 12 26 17M150 10V24M158 10V22M188 10V22M102 14V20M112 20V12C116 10 118 14 117 20" strokeWidth="1.200" />
        </svg>
        <svg width="16" height="14" viewBox="0 0 16 14" stroke="#171c23" className="absolute left-[614px] top-[0px]"><path d="M1 0L14 12M14 0L2 12" /></svg>
      </div>
    </div>
  );
}

export default function App() {
  return (
    <div className="flex h-[720px] w-[1280px] flex-col overflow-hidden bg-black px-px pb-[18px] pt-[18px]">
      <TitleBar />
      <RibbonTabs />
      <DocTabs />
      <Toolbars />
      <div className="flex h-[497px] shrink-0">
        <DrawBar />
        <Canvas />
        <ModifyBar />
      </div>
      <CommandLine />
      <StatusBar />
      <div className="h-[4px] shrink-0 bg-[#cfdde6]" />
    </div>
  );
}
